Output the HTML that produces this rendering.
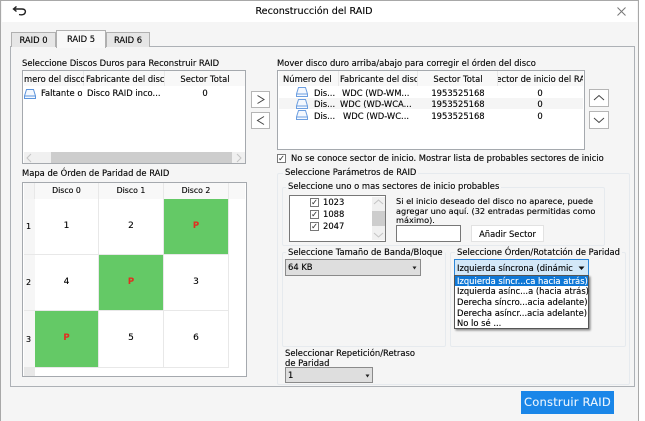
<!DOCTYPE html>
<html><head><meta charset="utf-8"><style>
html,body{margin:0;padding:0;width:645px;height:421px;overflow:hidden;background:#fff}
#w{position:absolute;left:0;top:0;width:645px;height:421px;overflow:hidden;filter:blur(.35px);font-family:"DejaVu Sans","Liberation Sans",sans-serif;font-size:8.4px;color:#000;-webkit-text-stroke:.12px currentColor}
#w div{position:absolute;box-sizing:border-box}
.t{white-space:nowrap;line-height:12px;height:12px}
.c{text-align:center}
.box{background:#fff;border:1.5px solid #a5a9ae}
.g{border:1px solid #e6eaee;border-radius:2px}
.lb{background:#f5f5f5;padding:0 2px}
.hd{background:#f8f8f8;height:15px;border-right:1px solid #e8e8e8}
.b{background:#fff;border:1px solid #b5b5b5;text-align:center;color:#444}
.sel{background:#dedede;border:1.5px solid #8a8a8a}
.chk{width:9px;height:9px;border:1px solid #777;background:#fff;font-size:8px;line-height:8px;text-align:center;color:#333}
.cell{background:#fff;text-align:center;border-right:1px solid #e8e8e8;border-bottom:1px solid #e8e8e8;font-size:9px;color:#000}
.gr{background:#64c966;color:#e03020;font-weight:bold;font-size:8.500px}
.rh{background:#f6f6f6;font-size:8px;color:#000;border-bottom:1px solid #e8e8e8;text-align:left;padding-left:2px}
svg{position:absolute}
</style></head><body><div id="w">
<div style="left:0;top:0;width:639px;height:421px;background:#f5f5f5;border-left:1.5px solid #a8a8a8;border-right:1.5px solid #a8a8a8;border-top:1px solid #a8a8a8"></div>
<div style="left:2px;top:1px;width:635px;height:21px;background:#fff"></div>
<svg style="left:12px;top:6px" width="16" height="11" viewBox="0 0 16 11"><path d="M2 3H10C13 3 14 5 13 7C12 9 9 9 7 8.500M4.500 .5L1.500 3L4.500 5.500" fill="none" stroke="#222" stroke-width="1.400"/></svg>
<div class="t c" style="left:222px;top:6px;width:184px;font-size:9.600px">Reconstrucción del RAID</div>
<svg style="left:616px;top:6px" width="11" height="11"><path d="M1.500 1.500L9.500 9.500M9.500 1.500L1.500 9.500" stroke="#777" stroke-width="1"/></svg>

<div style="left:10px;top:46px;width:625px;height:341px;border:1.5px solid #adb1b6;background:#f5f5f5"></div>
<div class="t c" style="left:11px;top:32px;width:45px;height:15px;background:#e6e6e6;border:1px solid #b0b0b0;border-bottom:0;line-height:14px">RAID 0</div>
<div class="t c" style="left:106px;top:32px;width:44px;height:15px;background:#e6e6e6;border:1px solid #b0b0b0;border-bottom:0;line-height:14px">RAID 6</div>
<div class="t c" style="left:56px;top:30px;width:50px;height:18px;background:#f8f8f8;border:1px solid #b0b0b0;border-bottom:0;line-height:16px">RAID 5</div>

<div class="t" style="left:22px;top:57px">Seleccione Discos Duros para Reconstruir RAID</div>
<div class="box" style="left:22px;top:70px;width:224px;height:94px"></div>
<div class="hd" style="left:24px;top:71px;width:60px"></div>
<div class="hd" style="left:84px;top:71px;width:81px"></div>
<div class="hd" style="left:165px;top:71px;width:80px;border:0"></div>
<div style="left:24px;top:71px;width:60px;height:15px;overflow:hidden"><div class="t" style="left:0;top:2px">mero del disco</div></div>
<div style="left:86px;top:71px;width:78px;height:15px;overflow:hidden"><div class="t" style="left:0;top:2px">Fabricante del disc</div></div>
<div class="t c" style="left:165px;top:73px;width:80px">Sector Total</div>
<svg style="left:23px;top:88px" width="14" height="12"><path d="M3.500 1.500H10.500L12.500 8V10.500H1.500V8Z M1.500 8H12.500" fill="#f4f8fe" stroke="#5c94dc"/></svg>
<div class="t" style="left:41px;top:87px">Faltante o</div>
<div class="t" style="left:87px;top:87px">Disco RAID inco...</div>
<div class="t c" style="left:165px;top:87px;width:80px">0</div>
<div style="left:24px;top:152px;width:221px;height:11px;background:#f0f0f0"></div>
<div style="left:51px;top:152px;width:181px;height:11px;background:#cdcdcd"></div>
<svg style="left:25px;top:153px" width="220" height="10"><path d="M6 1L2 5L6 9" fill="none" stroke="#c4c4c4"/><path d="M212 1L216 5L212 9" fill="none" stroke="#c4c4c4"/></svg>

<div class="t" style="left:22px;top:167px">Mapa de Órden de Paridad de RAID</div>
<div class="box" style="left:22px;top:182px;width:225px;height:195px"></div>
<div class="hd" style="left:24px;top:183px;width:11px;height:16px;background:#f4f4f4"></div>
<div class="hd t c" style="left:35px;top:183px;width:64px;height:16px;line-height:15px;font-size:7.800px">Disco 0</div>
<div class="hd t c" style="left:99px;top:183px;width:65px;height:16px;line-height:15px;font-size:7.800px">Disco 1</div>
<div class="hd t c" style="left:164px;top:183px;width:65px;height:16px;line-height:15px;font-size:7.800px">Disco 2</div>
<div class="hd" style="left:229px;top:183px;width:16px;height:16px;border:0"></div>
<div class="rh" style="left:24px;top:199px;width:11px;height:56px;line-height:56px">1</div>
<div class="rh" style="left:24px;top:255px;width:11px;height:56px;line-height:56px">2</div>
<div class="rh" style="left:24px;top:311px;width:11px;height:57px;line-height:57px">3</div>
<div style="left:24px;top:368px;width:11px;height:8px;background:#e8e8e8"></div>
<div class="cell" style="left:35px;top:199px;width:64px;height:56px;line-height:54px">1</div>
<div class="cell" style="left:99px;top:199px;width:65px;height:56px;line-height:54px">2</div>
<div class="cell gr" style="left:164px;top:199px;width:65px;height:56px;line-height:54px">P</div>
<div class="cell" style="left:35px;top:255px;width:64px;height:56px;line-height:54px">4</div>
<div class="cell gr" style="left:99px;top:255px;width:65px;height:56px;line-height:54px">P</div>
<div class="cell" style="left:164px;top:255px;width:65px;height:56px;line-height:54px">3</div>
<div class="cell gr" style="left:35px;top:311px;width:64px;height:57px;line-height:55px">P</div>
<div class="cell" style="left:99px;top:311px;width:65px;height:57px;line-height:55px">5</div>
<div class="cell" style="left:164px;top:311px;width:65px;height:57px;line-height:55px">6</div>

<div class="b" style="left:251px;top:91px;width:19px;height:17px"></div>
<div class="b" style="left:251px;top:112px;width:19px;height:17px"></div>
<svg style="left:251px;top:91px" width="19" height="38"><path d="M6.500 4.500L13 8.500L6.500 12.500" fill="none" stroke="#444"/><path d="M13 25.500L6.500 29.500L13 33.500" fill="none" stroke="#444"/></svg>

<div class="t" style="left:277px;top:57px">Mover disco duro arriba/abajo para corregir el órden del disco</div>
<div class="box" style="left:277px;top:70px;width:308px;height:80px"></div>
<div class="hd" style="left:279px;top:71px;width:60px"></div>
<div class="hd" style="left:339px;top:71px;width:79px"></div>
<div class="hd" style="left:418px;top:71px;width:80px"></div>
<div class="hd" style="left:498px;top:71px;width:85px;border:0"></div>
<div style="left:279px;top:71px;width:54px;height:15px;overflow:hidden"><div class="t" style="left:4px;top:2px">Número del disco</div></div>
<div style="left:340px;top:71px;width:77px;height:15px;overflow:hidden"><div class="t" style="left:0;top:2px">Fabricante del disc</div></div>
<div class="t c" style="left:418px;top:73px;width:80px">Sector Total</div>
<div style="left:498px;top:71px;width:85px;height:15px;overflow:hidden"><div class="t" style="left:-7px;top:2px">Sector de inicio del RAID</div></div>
<div style="left:279px;top:98px;width:304px;height:11px;background:#f5f5f5"></div>
<svg style="left:295px;top:86px" width="14" height="36"><g fill="#f4f8fe" stroke="#6c9ee0"><path d="M3.500 1.500H10.500L12.500 8V10.500H1.500V8Z M1.500 8H12.500"/><path d="M3.500 13.500H10.500L12.500 20V22.500H1.500V20Z M1.500 20H12.500"/><path d="M3.500 24.500H10.500L12.500 31V33.500H1.500V31Z M1.500 31H12.500"/></g></svg>
<div class="t" style="left:314px;top:87px">Dis...</div>
<div class="t" style="left:314px;top:98px">Dis...</div>
<div class="t" style="left:314px;top:110px">Dis...</div>
<div class="t" style="left:342px;top:87px">WDC (WD-WM...</div>
<div class="t" style="left:340px;top:98px">WDC (WD-WCA...</div>
<div class="t" style="left:343px;top:110px">WDC (WD-WC...</div>
<div class="t c" style="left:418px;top:87px;width:80px">1953525168</div>
<div class="t c" style="left:418px;top:98px;width:80px">1953525168</div>
<div class="t c" style="left:418px;top:110px;width:80px">1953525168</div>
<div class="t c" style="left:500px;top:87px;width:80px">0</div>
<div class="t c" style="left:500px;top:98px;width:80px">0</div>
<div class="t c" style="left:500px;top:110px;width:80px">0</div>
<div class="b" style="left:589px;top:89px;width:20px;height:18px"></div>
<div class="b" style="left:589px;top:111px;width:20px;height:18px"></div>
<svg style="left:589px;top:89px" width="20" height="40"><path d="M5 11L10 6.500L15 11" fill="none" stroke="#444"/><path d="M5 29L10 33.500L15 29" fill="none" stroke="#444"/></svg>

<div class="chk" style="left:277px;top:154px">✓</div>
<div class="t" style="left:291px;top:152px">No se conoce sector de inicio. Mostrar lista de probables sectores de inicio</div>

<div class="g" style="left:277px;top:173px;width:353px;height:212px"></div>
<div class="t lb" style="left:283px;top:166px">Seleccione Parámetros de RAID</div>
<div class="g" style="left:282px;top:187px;width:323px;height:59px"></div>
<div class="t lb" style="left:286px;top:180px">Seleccione uno o mas sectores de inicio probables</div>
<div style="left:289px;top:195px;width:97px;height:47px;background:#fff;border:1.5px solid #777"></div>
<div class="chk" style="left:310px;top:198px">✓</div>
<div class="chk" style="left:310px;top:210px">✓</div>
<div class="chk" style="left:310px;top:222px">✓</div>
<div class="t" style="left:323px;top:196px">1023</div>
<div class="t" style="left:323px;top:208px">1088</div>
<div class="t" style="left:323px;top:220px">2047</div>
<div style="left:372px;top:197px;width:13px;height:43px;background:#f0f0f0"></div>
<div style="left:372px;top:211px;width:13px;height:15px;background:#cdcdcd"></div>
<svg style="left:372px;top:197px" width="13" height="43"><path d="M2 7L6.500 3L11 7M2 36L6.500 40L11 36" fill="none" stroke="#c4c4c4"/></svg>
<div class="t" style="left:396px;top:195px;font-size:8.200px">Si el inicio deseado del disco no aparece, puede</div>
<div class="t" style="left:396px;top:205px;font-size:8.200px">agregar uno aquí. (32 entradas permitidas como</div>
<div class="t" style="left:396px;top:214px;font-size:8.200px">máximo).</div>
<div style="left:396px;top:225px;width:65px;height:17px;background:#fff;border:1.5px solid #777"></div>
<div class="t c" style="left:471px;top:225px;width:73px;height:17px;line-height:17px;background:#fff;border:1px solid #e2e2e2">Añadir Sector</div>

<div class="g" style="left:282px;top:252px;width:164px;height:95px"></div>
<div class="t lb" style="left:286px;top:246px">Seleccione Tamaño de Banda/Bloque</div>
<div class="sel" style="left:285px;top:259px;width:136px;height:17px"></div>
<div class="t" style="left:288px;top:261px">64 KB</div>
<svg style="left:412px;top:266px" width="5" height="4"><path d="M.5 .5H4.500L2.500 3.500Z" fill="#222"/></svg>

<div class="g" style="left:450px;top:252px;width:176px;height:95px"></div>
<div class="t lb" style="left:455px;top:246px">Seleccione Órden/Rotatción de Paridad</div>
<div style="left:454px;top:259px;width:135px;height:18px;background:#d3e8f8;border:1.5px solid #2b86d8"></div>
<div class="t" style="left:457px;top:262px">Izquierda síncrona (dinámic</div>
<svg style="left:578px;top:266px" width="7" height="5"><path d="M.5 .5H6.500L3.500 4Z" fill="#111"/></svg>
<div style="left:454px;top:275px;width:135px;height:54px;background:#fff;border:1px solid #555;box-shadow:1.500px 1.500px 2px #888"></div>
<div style="left:455px;top:276px;width:133px;height:10px;background:#0f78d6"></div>
<div class="t" style="left:457px;top:275px;color:#fff">Izquierda síncr...ca hacia atrás)</div>
<div class="t" style="left:457px;top:285px">Izquierda asínc...a (hacia atrás)</div>
<div class="t" style="left:457px;top:296px">Derecha síncro...acia adelante)</div>
<div class="t" style="left:457px;top:307px">Derecha asíncr...acia adelante)</div>
<div class="t" style="left:457px;top:317px">No lo sé ...</div>

<div class="t" style="left:285px;top:347px">Seleccionar Repetición/Retraso</div>
<div class="t" style="left:285px;top:357px">de Paridad</div>
<div class="sel" style="left:285px;top:367px;width:88px;height:16px"></div>
<div class="t" style="left:288px;top:369px">1</div>
<svg style="left:365px;top:374px" width="5" height="4"><path d="M.5 .5H4.500L2.500 3.500Z" fill="#222"/></svg>

<div class="t c" style="left:521px;top:391px;width:93px;height:23px;line-height:22px;background:#1a86e8;color:#e8f3fd;font-size:11.500px;letter-spacing:.2px">Construir RAID</div>
</div></body></html>
